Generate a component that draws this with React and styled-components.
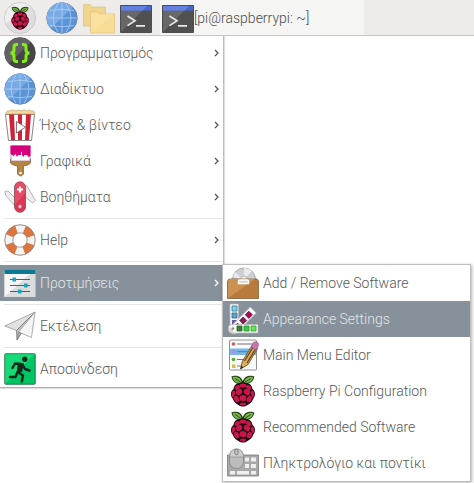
import React from "react";
import styled, { createGlobalStyle } from "styled-components";

const GlobalStyle = createGlobalStyle`
    body {
        margin: 0;
        background: #ffffff;
        font-family: Roboto, "Noto Sans", sans-serif;
        font-size: 14px;
        font-weight: 300;
    }
`
const Desktop = styled.div`
    min-height: 100vh;
`
const Panel = styled.header`
    position: relative;
    z-index: 1;
    box-sizing: border-box;
    height: 36px;
    display: flex;
    align-items: center;
    padding-left: 4px;
    background: #edecea;
    border-bottom: 1px solid #c6c6c6;
`
const Launchers = styled.nav`
    display: flex;
    align-items: center;
    gap: 5px;
`
const Launcher = styled.button`
    display: flex;
    padding: 0 ${(props) => (props.$spaced ? "5px" : "0")} 0 0;
    border: none;
    background: none;
    cursor: pointer;

    svg {
        width: 32px;
        height: 32px;
    }
`
const TaskButton = styled.button`
    display: flex;
    align-items: center;
    flex: 0 1 204px;
    height: 35px;
    margin-left: 8px;
    padding: 0 2px;
    border: none;
    background: #f5f5f4;
    font: inherit;
    color: #4c4c4c;
    white-space: nowrap;
    cursor: pointer;

    svg {
        width: 32px;
        height: 32px;
        flex: none;
    }
`
const MenuList = styled.ul`
    box-sizing: border-box;
    list-style: none;
    margin: 0;
    padding: 0;
    background: #ffffff;
`
/* tucked under the bottom edge of the panel */
const MainMenu = styled(MenuList)`
    width: 224px;
    margin-top: -1px;
    border-right: 1px solid #bdbdbd;
    border-bottom: 1px solid #b0b0b0;
    box-shadow: 1px 1px 1px rgba(0, 0, 0, 0.12);
`
const SubMenu = styled(MenuList)`
    position: absolute;
    top: -1px;
    left: 100%;
    width: 249px;
    margin-left: -1px;
    border: 1px solid #bdbdbd;
    box-shadow: 1px 1px 3px rgba(0, 0, 0, 0.3);
`
const MenuItem = styled.li`
    position: relative;
`
const Separator = styled.li`
    height: 1px;
    margin: 3px 0 3px 4px;
    background: #e6e6e6;
`
const ItemButton = styled.button`
    box-sizing: border-box;
    display: flex;
    align-items: center;
    gap: 4px;
    width: 100%;
    height: 36px;
    padding: 0 4px;
    border: none;
    background: ${(props) => (props.$selected ? "#87919b" : "transparent")};
    font: inherit;
    color: ${(props) => (props.$selected ? "#e2e5e8" : "#585858")};
    text-align: left;
    white-space: nowrap;
    cursor: pointer;
`
const ItemIcon = styled.span`
    display: flex;
    flex: none;

    svg {
        width: 32px;
        height: 32px;
    }
`
const ItemLabel = styled.span`
    flex: 1;
`
const Arrow = styled.svg`
    width: 5px;
    height: 8px;
    fill: none;
    stroke: ${(props) => (props.$selected ? "#ffffff" : "#555555")};
    stroke-width: 1.3;
`

const Icon = ({ children }) => (
    <svg viewBox="0 0 32 32" aria-hidden="true">{children}</svg>
)

const Berry = () => (
    <g>
        <path d="M15.8 9C10 10 4.800 6.500 4.500 1.500C7 .2 13.500-.2 15.800 6C18.200-.2 24.800 .2 27.300 1.500C27 6.500 21.800 10 15.800 9Z" fill="#263b12" />
        <path d="M15 8.300C10 8.500 6.200 6 5.600 2.200C10 1 14 3 15 8.300ZM16.700 8.300C21.700 8.500 25.600 6 26.200 2.200C21.800 1 17.700 3 16.700 8.300Z" fill="#72b84a" />
        <path d="M8 3.500L14.600 7.800M23.800 3.500L17.200 7.800" stroke="#2c551d" strokeWidth="1" />
        <path d="M16 7.600C21 7 25.300 10 25.500 14C28.600 16 28.800 21 26.300 23.500C25.300 27.700 19.500 31.500 16 31.600C12.500 31.500 6.700 27.700 5.700 23.500C3.200 21 3.400 16 6.500 14C6.700 10 11 7 16 7.600Z" fill="#240712" />
        <g fill="#c8174b">
            <ellipse cx="16" cy="10.500" rx="3.500" ry="2" />
            <ellipse cx="10.300" cy="12.500" rx="3" ry="2" transform="rotate(-35 10.300 12.500)" />
            <ellipse cx="21.700" cy="12.500" rx="3" ry="2" transform="rotate(35 21.700 12.500)" />
            <ellipse cx="12" cy="17" rx="3.400" ry="2.800" transform="rotate(-35 12 17)" />
            <ellipse cx="20" cy="17" rx="3.400" ry="2.800" transform="rotate(35 20 17)" />
            <ellipse cx="6.400" cy="18.800" rx="1.600" ry="3.400" transform="rotate(8 6.400 18.800)" />
            <ellipse cx="25.600" cy="18.800" rx="1.600" ry="3.400" transform="rotate(-8 25.600 18.800)" />
            <ellipse cx="16" cy="23" rx="3.500" ry="3.100" />
            <ellipse cx="9.600" cy="24" rx="2.400" ry="3.400" transform="rotate(-35 9.600 24)" />
            <ellipse cx="22.400" cy="24" rx="2.400" ry="3.400" transform="rotate(35 22.400 24)" />
            <ellipse cx="16" cy="29" rx="3" ry="1.600" />
        </g>
    </g>
)

const RaspberryIcon = () => <Icon><Berry /></Icon>

const MenuLogoIcon = () => (
    <Icon>
        <circle cx="16" cy="16" r="15.500" fill="#dedede" stroke="#c9c9c9" />
        <path d="M2 22A15.500 15.500 0 0 1 27 5Z" fill="#eeeeee" />
        <g transform="translate(4.300 4.300) scale(.74)"><Berry /></g>
    </Icon>
)

const GlobeIcon = () => (
    <Icon>
        <circle cx="16" cy="16" r="15.200" fill="#5b93d7" stroke="#6284ad" strokeWidth="1" />
        <path d="M5 26.500A15 15 0 0 1 26.800 5.200Z" fill="#78aae4" />
        <path d="M16 1V31M1 16H31M4 8.500Q16 6 28 8.500M4 23.500Q16 26 28 23.500M12 1.500Q2 16 12 30.500M20 1.500Q30 16 20 30.500" fill="none" stroke="#b9d6f5" strokeWidth=".7" />
    </Icon>
)

const FoldersIcon = () => (
    <Icon>
        <path d="M.5 2.500H7L9 5H22.500V24H.5Z" fill="#f1d58d" stroke="#dfc481" strokeWidth=".8" />
        <path d="M7.500 9.500H14.500L16.500 12H31.500V31H7.500Z" fill="#f8dd96" stroke="#dfc480" strokeWidth=".8" />
        <path d="M8 31V12H31Z" fill="#fbe4a7" opacity=".6" />
    </Icon>
)

const TerminalIcon = () => (
    <Icon>
        <path d="M.5 3.500H31.500V30.500H.5Z" fill="#505050" />
        <path d="M1 30V4H27Z" fill="#686868" />
        <path d="M1 4H31V8.500H1Z" fill="#4868cf" />
        <path d="M1 4H27L22.500 8.500H1Z" fill="#6480e1" />
        <path d="M.5 3.500H31.500V30.500H.5Z" fill="none" stroke="#4c4c50" />
        <path d="M7.500 14L15 18.800L7.500 23.600M16 23.800H25" fill="none" stroke="#e8e8e8" strokeWidth="1.700" />
    </Icon>
)

const CodeIcon = () => (
    <Icon>
        <circle cx="16" cy="16" r="15.300" fill="#464646" stroke="#3c3c3c" strokeWidth=".8" />
        <path d="M5 26.500A15 15 0 0 1 26.800 5.200Z" fill="#626262" />
        <path d="M14 7.500H12.500Q10 7.500 10 10V13Q10 16 6.500 16Q10 16 10 19V22Q10 24.500 12.500 24.500H14M18 7.500H19.500Q22 7.500 22 10V13Q22 16 25.500 16Q22 16 22 19V22Q22 24.500 19.500 24.500H18" fill="none" stroke="#83ed1c" strokeWidth="3" />
    </Icon>
)

const PopcornIcon = () => (
    <Icon>
        <path d="M1.500 5.500L4.500 31.500H27.500L30.500 5.500Z" fill="#ffffff" stroke="#6d6663" strokeWidth=".8" />
        <path d="M5 5H10L11 31H7ZM14 5H18V31H14ZM22 5H27L25 31H21Z" fill="#cf2338" />
        <path d="M2 5Q2 1 6 2Q8-.5 11 2Q14 0 17 2Q20-.5 23 2Q26 0 27 2Q31 1 30.500 5Z" fill="#f6d99a" stroke="#bca67a" strokeWidth=".7" />
        <path d="M12.500 12.500V24L21.500 18.200Z" fill="#ffffff" stroke="#6b5554" strokeWidth=".8" />
    </Icon>
)

const PaintIcon = () => (
    <Icon>
        <path d="M6.500 14H26.500V18Q25.500 20 19.500 21L19.500 29Q16.500 33 13.500 29V21Q7.500 20 6.500 18Z" fill="#b48646" stroke="#856634" strokeWidth=".8" />
        <path d="M7 1H26V16H7Z" fill="#ffffff" stroke="#b7729a" strokeWidth=".8" />
        <path d="M6.500 .5H26.500V11L24.500 12L23 10H20.500L19.500 12L18 10V7.500L17 6.500V10H14L13 12L11.500 9L9.500 11L6.500 9Z" fill="#d6007c" />
        <circle cx="16.500" cy="28" r="1.300" fill="#ffffff" />
    </Icon>
)

const KnifeIcon = () => (
    <Icon>
        <path d="M.8 10.500L4 10L16 22L12 26L2 15Z" fill="#eeeeee" stroke="#a4a4a4" strokeWidth=".8" />
        <path d="M19 3.500L23 5L31.500 19.500L28.500 22L18 13Z" fill="#eeeeee" stroke="#a4a4a4" strokeWidth=".8" />
        <rect x="10.500" y=".8" width="11" height="30.500" rx="5.500" fill="#dc3652" stroke="#864653" strokeWidth=".8" />
        <path d="M11 24V6Q12 1 17 1.500L21 4V12Z" fill="#ed5b71" opacity=".65" />
        <path d="M16 5.500V11.500M13 8.500H19" stroke="#ffffff" strokeWidth="1.900" />
        <circle cx="16" cy="25.500" r="2" fill="#eec7ce" stroke="#a45366" strokeWidth=".6" />
    </Icon>
)

const HelpIcon = () => (
    <Icon>
        <circle cx="16" cy="16" r="11.200" fill="none" stroke="#f3f3f3" strokeWidth="8" />
        <circle cx="16" cy="16" r="11.200" fill="none" stroke="#dc7540" strokeWidth="8" strokeDasharray="9.600 8" strokeDashoffset="-4" />
        <circle cx="16" cy="16" r="15.300" fill="none" stroke="#82756f" strokeWidth=".8" />
        <circle cx="16" cy="16" r="7.200" fill="none" stroke="#8c8c8c" strokeWidth=".8" />
    </Icon>
)

const PreferencesIcon = () => (
    <Icon>
        <path d="M.5 2.500H31.500V30H.5Z" fill="#dadddd" />
        <path d="M.5 30V5L31 2.500Z" fill="#f6f6f6" />
        <path d="M.5 2.500H31.500V7H.5Z" fill="#0c7992" />
        <path d="M6 12.500H26M6 18.500H26M6 24.500H26" stroke="#4a6065" strokeWidth="1.200" />
        <path d="M8.500 10.500H12V14.500H8.500ZM20 16.500H23.500V20.500H20ZM14 22.500H17.500V26.500H14Z" fill="#17a6bc" />
    </Icon>
)

const PlaneIcon = () => (
    <Icon>
        <path d="M31 2L.8 16L12.500 20.500Z" fill="#e1e1e1" stroke="#999999" strokeWidth=".8" />
        <path d="M12.500 20.500L13 30L31 2Z" fill="#c2c2c2" stroke="#777777" strokeWidth=".8" />
        <path d="M31 2L14.500 22L27.500 27.500Z" fill="#f5f5f5" stroke="#999999" strokeWidth=".8" />
        <path d="M13 30L14.500 22L17 23.500Z" fill="#b3b3b3" stroke="#777777" strokeWidth=".6" />
    </Icon>
)

const LogoutIcon = () => (
    <Icon>
        <rect x=".8" y=".8" width="30.400" height="30.400" rx="1" fill="#00c565" stroke="#257348" />
        <path d="M1.300 30.700V1.300H30.700Z" fill="#16da77" />
        <circle cx="20.800" cy="6.300" r="2.700" fill="#102b1d" />
        <path d="M8.500 15L11 10.500L17.500 11L13.500 19L19 22.500L17.800 28.500M13.500 19L11.500 24H6M18.500 11.500L21 16L25.500 17.500" fill="none" stroke="#102b1d" strokeWidth="2.500" strokeLinecap="round" strokeLinejoin="round" />
        <path d="M13.500 10.500L20 10.500L18 19L13 20Z" fill="#102b1d" />
    </Icon>
)

const PackageIcon = () => (
    <Icon>
        <circle cx="17" cy="12.500" r="11.500" fill="#ccd0d4" stroke="#969ca2" strokeWidth=".8" />
        <path d="M17 1V12L25 4Q21 1 17 1ZM6 10L15 12L8 5Z" fill="#e9ecef" />
        <circle cx="17" cy="12.500" r="3.500" fill="#eeeeee" stroke="#a7a7a7" strokeWidth=".7" />
        <path d="M2 12H30L31.500 14V31.500H.5V14Z" fill="#b97b3d" stroke="#876038" strokeWidth=".8" />
        <path d="M1 31V14L2.500 12H28Z" fill="#ca9152" />
        <path d="M11.500 16.500V14Q11.500 13 13 13H20Q21.500 13 21.500 14V16.500Z" fill="#d5d5d5" stroke="#ffffff" strokeWidth="1.500" />
    </Icon>
)

const AppearanceIcon = () => (
    <Icon>
        <rect x="3" y="1" width="8.500" height="29" fill="#f8f8f8" stroke="#b4b4b4" strokeWidth=".7" />
        <path d="M5 3H10V8H5Z" fill="#77d4ef" stroke="#326d94" strokeWidth=".8" />
        <path d="M5 10H10V15H5Z" fill="#57a6d5" stroke="#34628c" strokeWidth=".8" />
        <path d="M5 17H10V22H5Z" fill="#665bae" />
        <g transform="rotate(45 7 26)">
            <rect x="3" y="-1" width="8.500" height="30" fill="#fafafa" stroke="#b4b4b4" strokeWidth=".7" />
            <path d="M5 3H10V8H5Z" fill="#a20f55" stroke="#6e0b3e" strokeWidth=".8" />
            <path d="M5 11H10V16H5Z" fill="#862055" stroke="#612043" strokeWidth=".8" />
            <path d="M5 19H10V23H5Z" fill="#5b2868" />
        </g>
        <path d="M3 21.500H31V30H5Q2 30 1.500 27Q1 23 3 21.500Z" fill="#f7f7f5" stroke="#b4b4b4" strokeWidth=".7" />
        <path d="M10 23H15V28H10Z" fill="#2f812e" stroke="#355e30" strokeWidth=".8" />
        <path d="M17 23H22V28H17Z" fill="#31cf3c" stroke="#328536" strokeWidth=".8" />
        <path d="M24 23H29V28H24Z" fill="#63e65a" stroke="#3b973b" strokeWidth=".8" />
        <path d="M2.500 24V28L6 31.500V26Z" fill="#d9d0c9" />
        <circle cx="6" cy="25.500" r="1.200" fill="#888888" />
    </Icon>
)

const MenuEditorIcon = () => (
    <Icon>
        <rect x="2.500" y="1" width="27" height="30" rx="1" fill="#fafafa" stroke="#929292" />
        <path d="M3 9.500H29V16H3Z" fill="#73b9ee" />
        <path d="M10 5H26M10 12.700H26M10 20.500H18M10 27H18" stroke="#777777" strokeWidth="1" />
        <circle cx="6.500" cy="5" r="1.800" fill="#c46060" />
        <circle cx="6.500" cy="12.700" r="1.800" fill="#b987d6" />
        <circle cx="6.500" cy="20.500" r="1.800" fill="#57a936" />
        <path d="M5 25.500H8.500V29H5Z" fill="#d0c34a" />
        <path d="M13.500 30L15.500 22L25 6.500L30.500 9.500L21 25.500Z" fill="#e5b14f" stroke="#504030" strokeWidth=".8" />
        <path d="M17.500 22L26.500 7.500M20 24L29 9" stroke="#5f482e" strokeWidth="1.400" />
        <path d="M24 8L26.500 3.500Q28 1.800 31 4Q32 5.500 31 7.500L29 11Z" fill="#d071b5" stroke="#8c5685" strokeWidth=".7" />
        <path d="M13.500 30L14.200 27L16.500 28.300Z" fill="#252525" />
    </Icon>
)

const KeyboardIcon = () => (
    <Icon>
        <path d="M.5 8H31.500V29H.5Z" fill="#a8a8a8" stroke="#777777" strokeWidth=".8" />
        <g fill="#eeeeee">
            <path d="M18 10.500H22V14.500H18ZM24 10.500H29V14.500H24ZM18 17H22V21H18ZM24 17H29V21H24ZM3 24H8V27.500H3ZM10 24H22V27.500H10ZM24 24H29V27.500H24Z" />
        </g>
        <path d="M2.500 10Q3 2 9.500 2Q16 2 16.500 10V15Q15.500 21.500 9.500 21.500Q3.500 21.500 2.500 15Z" fill="#bcbcbc" stroke="#838383" strokeWidth=".8" />
        <path d="M2.500 10Q3 2 9.500 2Q16 2 16.500 10Z" fill="#cecece" stroke="#888888" strokeWidth=".6" />
        <ellipse cx="9.500" cy="5" rx="1.800" ry="2.800" fill="#c4c4c4" stroke="#696969" strokeWidth=".8" />
    </Icon>
)

const mainItems = [
    { label: "Προγραμματισμός", icon: CodeIcon, arrow: true },
    { label: "Διαδίκτυο", icon: GlobeIcon, arrow: true },
    { label: "Ήχος & βίντεο", icon: PopcornIcon, arrow: true },
    { label: "Γραφικά", icon: PaintIcon, arrow: true },
    { label: "Βοηθήματα", icon: KnifeIcon, arrow: true },
    { separator: true },
    { label: "Help", icon: HelpIcon, arrow: true },
    { separator: true },
    {
        label: "Προτιμήσεις",
        icon: PreferencesIcon,
        arrow: true,
        selected: true,
        children: [
            { label: "Add / Remove Software", icon: PackageIcon },
            { label: "Appearance Settings", icon: AppearanceIcon, selected: true },
            { label: "Main Menu Editor", icon: MenuEditorIcon },
            { label: "Raspberry Pi Configuration", icon: RaspberryIcon },
            { label: "Recommended Software", icon: RaspberryIcon },
            { label: "Πληκτρολόγιο και ποντίκι", icon: KeyboardIcon },
        ],
    },
    { separator: true },
    { label: "Εκτέλεση", icon: PlaneIcon },
    { separator: true },
    { label: "Αποσύνδεση", icon: LogoutIcon },
]

function MenuEntry({ item }) {
    const Glyph = item.icon
    return (
        <MenuItem>
            <ItemButton type="button" $selected={item.selected}>
                <ItemIcon><Glyph /></ItemIcon>
                <ItemLabel>{item.label}</ItemLabel>
                {item.arrow && (
                    <Arrow viewBox="0 0 5 8" $selected={item.selected} aria-hidden="true">
                        <path d="M1 1L4 4L1 7" />
                    </Arrow>
                )}
            </ItemButton>
            {item.children && (
                <SubMenu>
                    {item.children.map((child) => (
                        <MenuEntry key={child.label} item={child} />
                    ))}
                </SubMenu>
            )}
        </MenuItem>
    )
}

function App() {
    return (
        <Desktop>
            <GlobalStyle />
            <Panel>
                <Launchers>
                    <Launcher type="button" aria-label="Menu" $spaced><MenuLogoIcon /></Launcher>
                    <Launcher type="button" aria-label="Web Browser"><GlobeIcon /></Launcher>
                    <Launcher type="button" aria-label="File Manager"><FoldersIcon /></Launcher>
                    <Launcher type="button" aria-label="Terminal"><TerminalIcon /></Launcher>
                </Launchers>
                <TaskButton type="button">
                    <TerminalIcon />
                    [pi@raspberrypi: ~]
                </TaskButton>
            </Panel>
            <MainMenu>
                {mainItems.map((item, index) =>
                    item.separator
                        ? <Separator key={index} role="separator" />
                        : <MenuEntry key={index} item={item} />
                )}
            </MainMenu>
        </Desktop>
    )
}

export default App;
